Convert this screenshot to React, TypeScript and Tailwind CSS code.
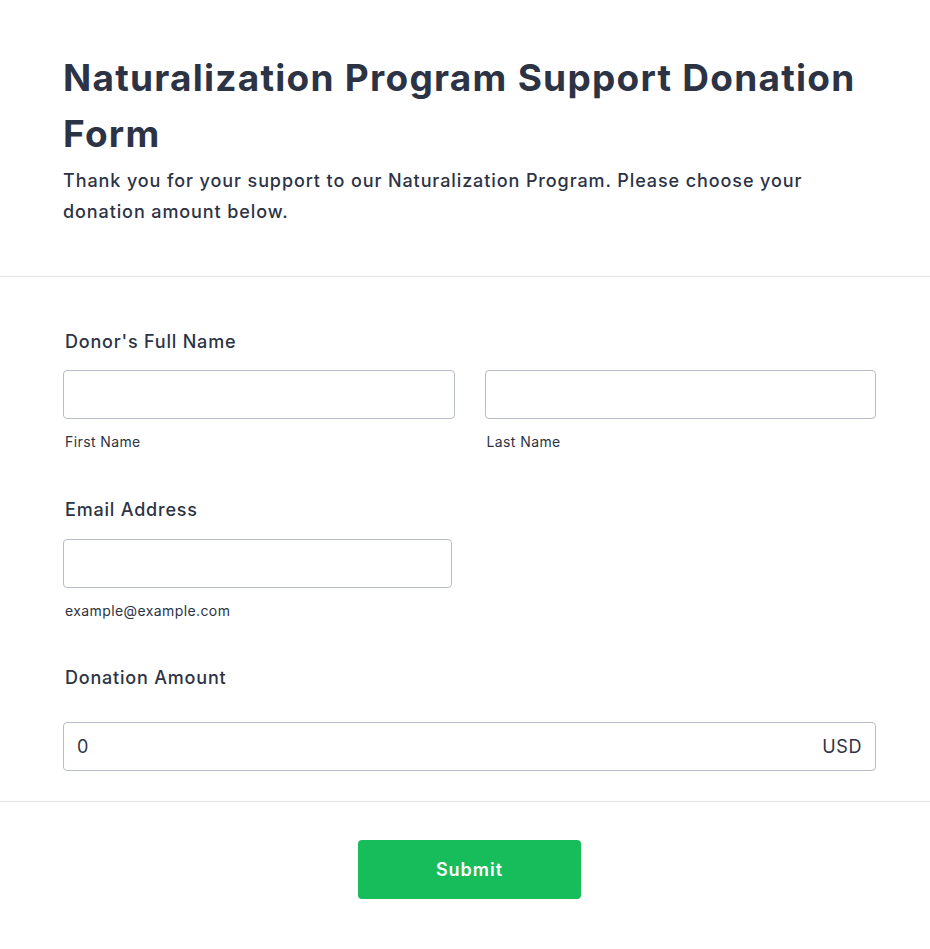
import React from "react";

export default function App() {
  const font = { fontFamily: "Inter, 'Noto Sans', sans-serif" };
  return (
    <div style={font} className="w-[930px] min-h-[949px] bg-white text-[#2c3345]">
      <div className="pl-[63px] pr-[54px] pt-[50px] h-[277px] border-b border-[#e3e5eb]">
        <h1 className="text-[37px] leading-[56px] font-bold tracking-[1.25px]">
          Naturalization Program Support Donation Form
        </h1>
        <p className="text-[18px] leading-[31px] font-medium mt-[3px] tracking-[0.9px]">
          Thank you for your support to our Naturalization Program. Please choose your donation amount below.
        </p>
      </div>

      <div className="pl-[63px] pr-[54px] pt-[51px] pb-[30px] border-b border-[#e3e5eb]">
        <label className="block text-[18px] leading-[28px] font-medium pl-[2px] tracking-[0.8px]">Donor's Full Name</label>
        <div className="flex gap-[30px] mt-[14px]">
          <div className="flex-1">
            <input className="w-full h-[49px] border border-[#b8bdc9] rounded-[4px] px-[12px] outline-none" />
            <div className="text-[14px] leading-[20px] text-[#2c3345] mt-[13px] pl-[2px] tracking-[0.4px]">First Name</div>
          </div>
          <div className="flex-1">
            <input className="w-full h-[49px] border border-[#b8bdc9] rounded-[4px] px-[12px] outline-none" />
            <div className="text-[14px] leading-[20px] text-[#2c3345] mt-[13px] pl-[2px] tracking-[0.4px]">Last Name</div>
          </div>
        </div>

        <label className="block text-[18px] leading-[28px] font-medium pl-[2px] mt-[44px] tracking-[0.8px]">Email Address</label>
        <div className="mt-[15px] w-[389px]">
          <input className="w-full h-[49px] border border-[#b8bdc9] rounded-[4px] px-[12px] outline-none" />
          <div className="text-[14px] leading-[20px] text-[#2c3345] mt-[13px] pl-[2px] tracking-[0.4px]">example@example.com</div>
        </div>

        <label className="block text-[18px] leading-[28px] font-medium pl-[2px] mt-[43px] tracking-[0.8px]">Donation Amount</label>
        <div className="mt-[30px] h-[49px] border border-[#b8bdc9] rounded-[4px] flex items-center justify-between pl-[13px] pr-[13px] text-[18px] tracking-[0.6px]">
          <span>0</span>
          <span>USD</span>
        </div>
      </div>

      <div className="flex justify-center pt-[38px] pl-[63px] pr-[54px]">
        <button className="w-[223px] h-[59px] bg-[#18bd5b] rounded-[4px] text-white text-[18px] font-semibold tracking-[1px]">
          Submit
        </button>
      </div>
    </div>
  );
}
